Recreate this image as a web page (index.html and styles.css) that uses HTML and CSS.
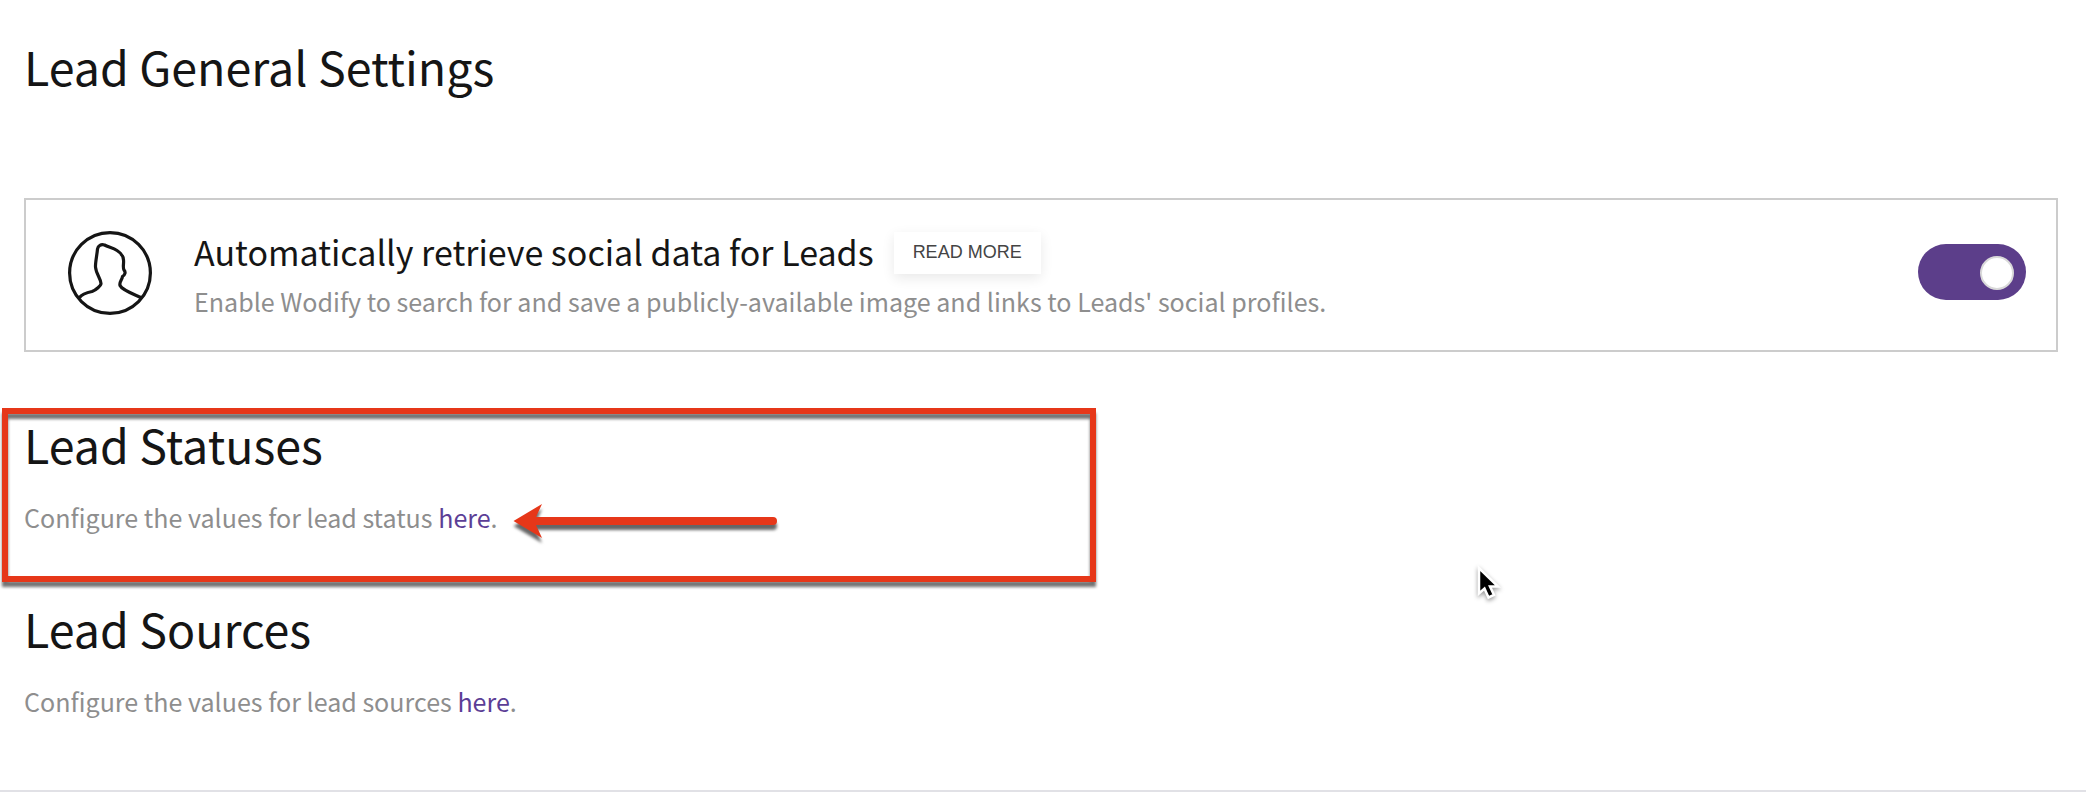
FILE: index.html
```html
<!DOCTYPE html>
<html lang="en">
<head>
  <meta charset="UTF-8">
  <title>Lead General Settings</title>
  <meta name="viewport" content="width=device-width, initial-scale=1.0">
  <link rel="stylesheet" href="styles.css">
</head>
<body>

<main class="settings">
  <h1>Lead General Settings</h1>

  <!-- Social data card -->
  <section class="card">
    <svg class="avatar" viewBox="0 0 84 84">
      <circle cx="42" cy="42" r="40.4"/>
      <path d="M11.5 66.5C14 63 19 61.5 24 60.5C28 59 33 54.500 33 52.500C33 48 28 43 27.500 36C27.300 31 29 24 29.500 18C30 14.500 33 13 36.500 14C40 16 45 17 49 19.500C53 22 55.500 25 55.500 29C56 33 54.500 36 56 39C58 41 57 44 54.500 45.500C54 49 51 51 52 54.500C54 59 64 62.500 73 66.500"/>
    </svg>
    <div class="card-text">
      <div class="card-title">
        <h3>Automatically retrieve social data for Leads</h3>
        <button class="read-more" type="button">READ MORE</button>
      </div>
      <p>Enable Wodify to search for and save a publicly-available image and links to Leads' social profiles.</p>
    </div>
    <div class="toggle"><span class="knob"></span></div>
  </section>

  <section class="group">
    <h2>Lead Statuses</h2>
    <p>Configure the values for lead status <a href="#">here</a>.</p>
  </section>

  <section class="group">
    <h2>Lead Sources</h2>
    <p>Configure the values for lead sources <a href="#">here</a>.</p>
  </section>
</main>

<!-- Annotations -->
<div class="highlight"></div>
<svg class="arrow" viewBox="0 0 270 40">
  <path d="M0.500 20L29 3L23 16H260A4 4 0 0 1 260 24H23L29 37Z"/>
</svg>
<svg class="cursor" viewBox="0 0 24 36">
  <path d="M2 2V27.500L7.500 22.500L11.500 31.500L17 29L13 20.500H21Z"/>
</svg>

</body>
</html>
```

FILE: styles.css
```css
* {
  box-sizing: border-box;
}

body {
  position: relative;
  font-family: "Noto Sans CJK SC", "Noto Sans", sans-serif;
  background-color: #fff;
  color: #151515;
  margin: 0;
}

h1, h2, h3, p {
  margin: 0;
  font-weight: normal;
  white-space: nowrap;
}

.settings {
  height: 792px;
  padding: 36px 28px 0 24px;
  border-bottom: 2px solid #e1e1e6;
}

h1, h2 {
  font-size: 46.55px;
  line-height: 59px;
  padding-bottom: 1px;
}

p {
  font-size: 25.07px;
  line-height: 36px;
  color: #8e8e8e;
}

a {
  color: #5c3e96;
  text-decoration: none;
}

.card {
  display: flex;
  align-items: flex-start;
  height: 154px;
  margin-top: 102px;
  padding: 27px 30px 0 42px;
  border: 2px solid #ccc;
}

.avatar {
  width: 84px;
  height: 84px;
  margin-top: 4px;
  fill: none;
  stroke: #151515;
  stroke-width: 3.2;
}

.card-text {
  flex: 1;
  margin-left: 42px;
}

.card-title {
  display: flex;
  align-items: flex-start;
  gap: 20px;
  margin-bottom: 7px;
}

h3 {
  font-size: 34.02px;
  line-height: 49px;
}

.read-more {
  width: 147px;
  height: 42px;
  margin-top: 5px;
  padding: 0 0 2px;
  border: none;
  background-color: #fff;
  color: #444;
  font-family: "Liberation Sans", Arial, sans-serif;
  font-size: 18px;
  box-shadow: 0 4px 12px rgba(0, 0, 0, 0.09);
}

.toggle {
  display: flex;
  justify-content: flex-end;
  width: 108px;
  height: 56px;
  margin-top: 17px;
  padding: 12px;
  border-radius: 28px;
  background-color: #5c3e8a;
}

.knob {
  width: 34px;
  height: 34px;
  border: 2px solid #d9d9d9;
  border-radius: 50%;
  background-color: #fff;
}

.group {
  margin-top: 62px;
}

.group + .group {
  margin-top: 63px;
}

.group p {
  margin-top: 25px;
}

/* drawn over the page */
.highlight {
  position: absolute;
  left: 2px;
  top: 408px;
  width: 1094px;
  height: 174px;
  border: 6px solid #e63719;
  filter: drop-shadow(0 5px 1.5px rgba(0, 0, 0, 0.55));
}

.arrow {
  position: absolute;
  left: 513px;
  top: 501px;
  width: 270px;
  height: 40px;
  overflow: visible;
  fill: #e63719;
  filter: drop-shadow(0 5px 1.5px rgba(0, 0, 0, 0.6));
}

.cursor {
  position: absolute;
  left: 1477px;
  top: 566px;
  width: 24px;
  height: 36px;
  overflow: visible;
  fill: #000;
  stroke: #fff;
  stroke-width: 2.5;
  filter: drop-shadow(0 2px 2px rgba(0, 0, 0, 0.4));
}
```
